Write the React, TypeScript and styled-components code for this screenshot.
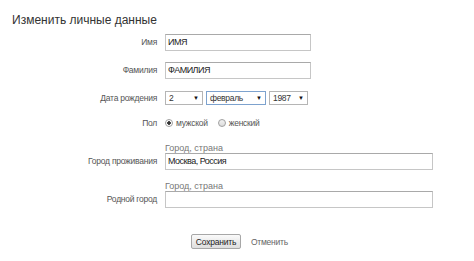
import styled, { createGlobalStyle } from "styled-components";

const GlobalStyle = createGlobalStyle`
    html, body {
        margin: 0;
        padding: 0;
        background: #ffffff;
    }
    body {
        font-family: "Liberation Sans", Arial, sans-serif;
        color: #333333;
    }
`;

const Page = styled.div`
    width: 474px;
    height: 261px;
    overflow: hidden;
    padding: 13px 0 0 12px;
    box-sizing: border-box;
`;

const Title = styled.h1`
    margin: 0;
    font-weight: normal;
    font-size: 12px;
    line-height: 15px;
    color: #333333;
`;

const Form = styled.div`
    display: grid;
    grid-template-columns: 145px 1fr;
    column-gap: 8px;
    align-items: end;
    margin-top: 6px;
`;

const Label = styled.div<{ $height: number }>`
    text-align: right;
    font-size: 8.5px;
    letter-spacing: -0.25px;
    line-height: ${(p) => p.$height}px;
    color: #555555;
`;

const Field = styled.div<{ $top?: number }>`
    display: flex;
    flex-direction: column;
    margin-top: ${(p) => p.$top ?? 0}px;
`;

const Hint = styled.div`
    font-size: 9px;
    line-height: 9px;
    color: #777777;
`;

const TextInput = styled.div<{ $width: number }>`
    width: ${(p) => p.$width}px;
    height: 17px;
    box-sizing: border-box;
    border: 1px solid #c6c6c6;
    border-top-color: #a9a9a9;
    padding: 0 2px;
    font-size: 9px;
    letter-spacing: -0.5px;
    line-height: 15px;
    color: #222222;
    background: #ffffff;
`;

const SelectRow = styled.div`
    display: flex;
    column-gap: 3px;
`;

const Select = styled.div<{ $width: number; $focused?: boolean }>`
    width: ${(p) => p.$width}px;
    height: 14px;
    box-sizing: border-box;
    border: 1px solid ${(p) => (p.$focused ? "#7da2ce" : "#b5b5b5")};
    display: flex;
    align-items: center;
    justify-content: space-between;
    padding: 0 3px 0 3px;
    font-size: 8.5px;
    letter-spacing: -0.3px;
    color: #333333;
`;

const Arrow = styled.span`
    font-size: 6px;
    letter-spacing: 0;
    color: #111111;
`;

const RadioGroup = styled.div`
    display: flex;
    align-items: center;
    height: 10px;
    font-size: 8.5px;
    letter-spacing: -0.25px;
    color: #555555;
`;

const RadioOption = styled.label`
    display: flex;
    align-items: center;
    column-gap: 3px;
    margin-right: 10px;
`;

const Radio = styled.span<{ $checked?: boolean }>`
    width: 6px;
    height: 6px;
    border-radius: 50%;
    border: 1px solid #a0a0a0;
    background: ${(p) =>
        p.$checked
            ? "radial-gradient(circle, #333 0 1.5px, #fff 2.1px)"
            : "linear-gradient(#f2f2f2, #dcdcdc)"};
`;

const Actions = styled.div`
    display: flex;
    align-items: center;
    column-gap: 10px;
    margin: 26px 0 0 179px;
`;

const SaveButton = styled.button`
    height: 15px;
    width: 50px;
    padding: 0;
    box-sizing: border-box;
    border: 1px solid #a7a7a7;
    border-radius: 2px;
    background: linear-gradient(#fafafa, #dedede);
    font-family: "Liberation Sans", Arial, sans-serif;
    font-size: 8.5px;
    letter-spacing: -0.2px;
    color: #222222;
`;

const CancelLink = styled.span`
    font-size: 8.5px;
    letter-spacing: -0.25px;
    color: #666666;
`;

export default function App() {
    return (
        <Page>
            <GlobalStyle />
            <Title>Изменить личные данные</Title>
            <Form>
                <Label $height={17}>Имя</Label>
                <Field>
                    <TextInput $width={146}>ИМЯ</TextInput>
                </Field>

                <Label $height={17}>Фамилия</Label>
                <Field $top={11}>
                    <TextInput $width={146}>ФАМИЛИЯ</TextInput>
                </Field>

                <Label $height={14}>Дата рождения</Label>
                <Field $top={12}>
                    <SelectRow>
                        <Select $width={38}>
                            2<Arrow>▼</Arrow>
                        </Select>
                        <Select $width={60} $focused>
                            февраль<Arrow>▼</Arrow>
                        </Select>
                        <Select $width={39}>
                            1987<Arrow>▼</Arrow>
                        </Select>
                    </SelectRow>
                </Field>

                <Label $height={10}>Пол</Label>
                <Field $top={13}>
                    <RadioGroup>
                        <RadioOption>
                            <Radio $checked />
                            мужской
                        </RadioOption>
                        <RadioOption>
                            <Radio />
                            женский
                        </RadioOption>
                    </RadioGroup>
                </Field>

                <Label $height={17}>Город проживания</Label>
                <Field $top={16}>
                    <Hint>Город, страна</Hint>
                    <TextInput $width={268}>Москва, Россия</TextInput>
                </Field>

                <Label $height={17}>Родной город</Label>
                <Field $top={12}>
                    <Hint>Город, страна</Hint>
                    <TextInput $width={268}></TextInput>
                </Field>
            </Form>
            <Actions>
                <SaveButton>Сохранить</SaveButton>
                <CancelLink>Отменить</CancelLink>
            </Actions>
        </Page>
    );
}
